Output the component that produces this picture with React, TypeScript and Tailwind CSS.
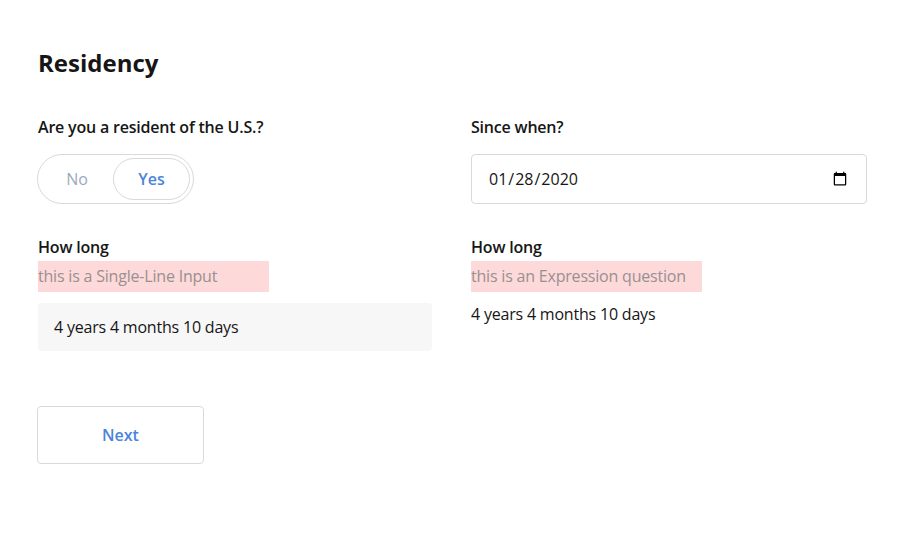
import { useState } from "react"

const font = { fontFamily: '"Open Sans", "Noto Sans", sans-serif' }

function Note({ text }: { text: string }) {
  return (
    <div className="h-[31px] w-[231px] bg-[#fdd9d9] text-[16px] leading-[31px] tracking-[-0.2px] text-[#999091]">
      {text}
    </div>
  )
}

export default function App() {
  const [resident, setResident] = useState(true)
  const [since, setSince] = useState("2020-01-28")

  return (
    <div className="min-h-[534px] w-full bg-white px-[38px] pt-[47px] text-[#161616]" style={font}>
      <h1 className="text-[24px] font-bold leading-[32px]">Residency</h1>

      <div className="mt-[36px] grid grid-cols-[394px_396px] gap-x-[39px]">
        {/* resident toggle */}
        <div>
          <div className="text-[16px] font-semibold leading-[24px] tracking-[-0.2px]">Are you a resident of the U.S.?</div>
          <div className="-ml-px mt-[15px] flex h-[50px] w-[157px] items-center rounded-full border border-[#d9d9d9] p-[3px]">
            <button
              onClick={() => setResident(false)}
              className={`h-[42px] w-[72px] rounded-full text-[16px] ${
                !resident ? "border border-[#d9d9d9] font-semibold text-[#4c84dc]" : "text-[#9aa9bd]"
              }`}
            >
              No
            </button>
            <button
              onClick={() => setResident(true)}
              className={`h-[42px] w-[77px] rounded-full text-[16px] ${
                resident ? "border border-[#d9d9d9] font-semibold text-[#4c84dc]" : "text-[#9aa9bd]"
              }`}
            >
              Yes
            </button>
          </div>
        </div>

        {/* since when */}
        <div>
          <div className="text-[16px] font-semibold leading-[24px] tracking-[-0.2px]">Since when?</div>
          <input
            type="date"
            value={since}
            onChange={(e) => setSince(e.target.value)}
            className="mt-[15px] h-[50px] w-full rounded-[4px] border border-[#d9d9d9] px-[16px] text-[16px] text-[#161616] outline-none"
            style={font}
          />
        </div>

        {/* how long - single line */}
        <div className="mt-[31px]">
          <div className="text-[16px] font-semibold leading-[24px] tracking-[-0.2px]">How long</div>
          <div className="mt-[2px]">
            <Note text="this is a Single-Line Input" />
          </div>
          <div className="mt-[11px] flex h-[48px] items-center rounded-[4px] bg-[#f7f7f7] px-[16px] text-[16px] tracking-[-0.2px]">
            4 years 4 months 10 days
          </div>
        </div>

        {/* how long - expression */}
        <div className="mt-[31px]">
          <div className="text-[16px] font-semibold leading-[24px] tracking-[-0.2px]">How long</div>
          <div className="mt-[2px]">
            <Note text="this is an Expression question" />
          </div>
          <div className="mt-[10px] text-[16px] leading-[24px] tracking-[-0.2px]">4 years 4 months 10 days</div>
        </div>
      </div>

      <button className="-ml-px mt-[55px] h-[58px] w-[167px] rounded-[4px] border border-[#d9d9d9] text-[16px] font-semibold text-[#4c84dc]">
        Next
      </button>
    </div>
  )
}
